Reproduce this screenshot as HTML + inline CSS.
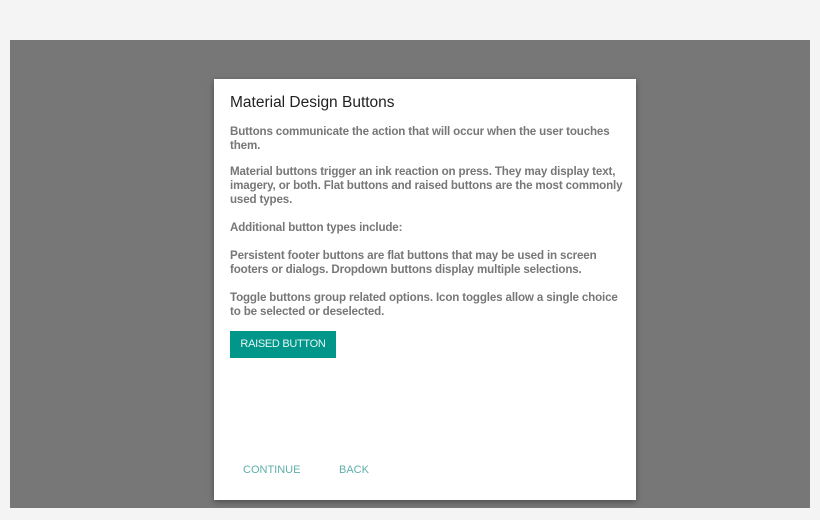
<!DOCTYPE html>
<html><head><style>
body{margin:0;width:820px;height:520px;background:#f4f4f4;position:relative;overflow:hidden;font-family:"Liberation Sans",sans-serif}
.ov{position:absolute;left:10px;top:40px;width:800px;height:468px;background:#777}
.dlg{position:absolute;left:214px;top:79px;width:422px;height:421px;background:#fff;box-shadow:0 2px 6px rgba(0,0,0,.35)}
.t{position:absolute;left:16px;top:15px;font-size:15.5px;color:#222}
.p{position:absolute;left:16px;font-size:11.6px;font-weight:bold;color:#777;line-height:14px;width:398px;letter-spacing:-0.15px}
.btn{position:absolute;left:16px;top:252px;width:106px;height:27px;background:#00968a;color:#e8f6f4;font-size:11px;line-height:27px;text-align:center;letter-spacing:-0.3px}
.f{position:absolute;top:385px;font-size:11px;color:#5fb0aa}
</style></head><body>
<div class="ov"></div>
<div class="dlg">
<div class="t">Material Design Buttons</div>
<div class="p" style="top:46px">Buttons communicate the action that will occur when the user touches them.</div>
<div class="p" style="top:86px">Material buttons trigger an ink reaction on press. They may display text, imagery, or both. Flat buttons and raised buttons are the most commonly used types.</div>
<div class="p" style="top:142px">Additional button types include:</div>
<div class="p" style="top:170px">Persistent footer buttons are flat buttons that may be used in screen footers or dialogs. Dropdown buttons display multiple selections.</div>
<div class="p" style="top:212px">Toggle buttons group related options. Icon toggles allow a single choice to be selected or deselected.</div>
<div class="btn">RAISED BUTTON</div>
<div class="f" style="left:29px">CONTINUE</div>
<div class="f" style="left:125px">BACK</div>
</div>
</body></html>
